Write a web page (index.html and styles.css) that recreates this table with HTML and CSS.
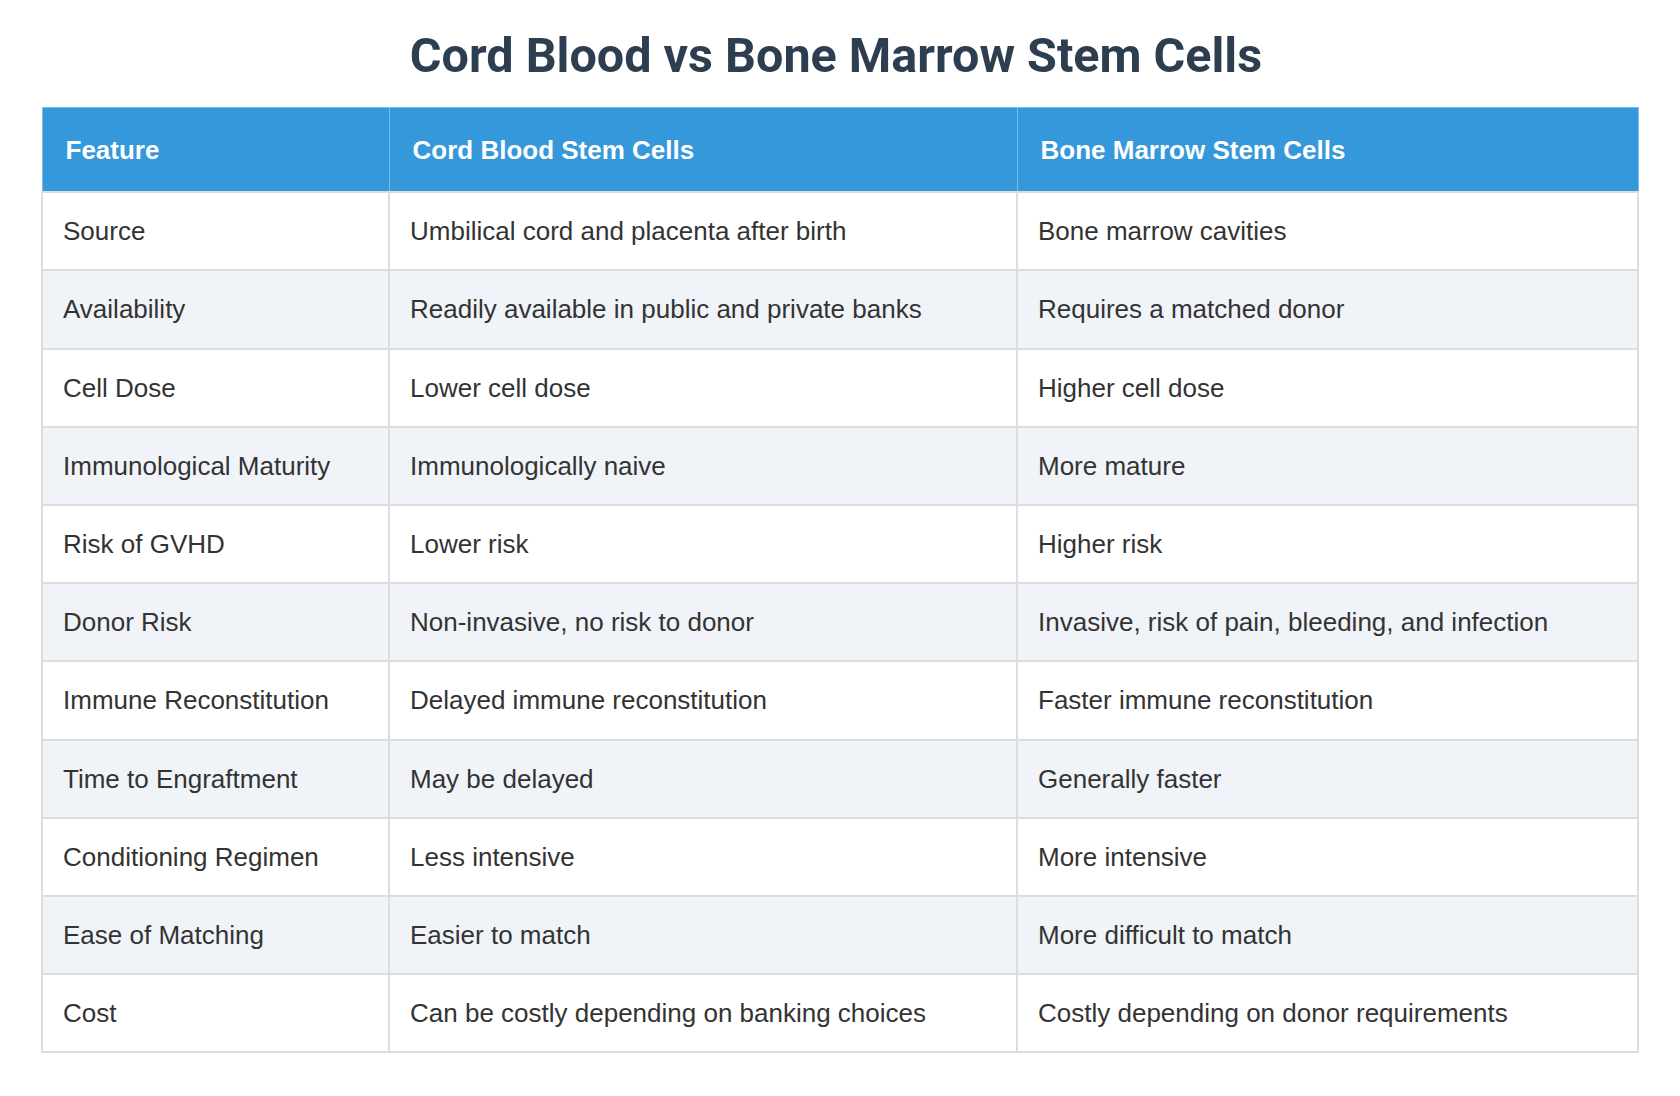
FILE: index.html
```html
<!DOCTYPE html>
<html lang="en">
<head>
<meta charset="utf-8">
<title>Cord Blood vs Bone Marrow Stem Cells</title>
<link rel="stylesheet" href="styles.css">
</head>
<body>
<div class="container">
  <h1 class="title">Cord Blood vs Bone Marrow Stem Cells</h1>
  <table class="compare">
    <colgroup>
      <col class="col-feature">
      <col class="col-cord">
      <col class="col-marrow">
    </colgroup>
    <thead>
      <tr><th>Feature</th><th>Cord Blood Stem Cells</th><th>Bone Marrow Stem Cells</th></tr>
    </thead>
    <tbody>
      <tr><td>Source</td><td>Umbilical cord and placenta after birth</td><td>Bone marrow cavities</td></tr>
      <tr><td>Availability</td><td>Readily available in public and private banks</td><td>Requires a matched donor</td></tr>
      <tr><td>Cell Dose</td><td>Lower cell dose</td><td>Higher cell dose</td></tr>
      <tr><td>Immunological Maturity</td><td>Immunologically naive</td><td>More mature</td></tr>
      <tr><td>Risk of GVHD</td><td>Lower risk</td><td>Higher risk</td></tr>
      <tr><td>Donor Risk</td><td>Non-invasive, no risk to donor</td><td>Invasive, risk of pain, bleeding, and infection</td></tr>
      <tr><td>Immune Reconstitution</td><td>Delayed immune reconstitution</td><td>Faster immune reconstitution</td></tr>
      <tr><td>Time to Engraftment</td><td>May be delayed</td><td>Generally faster</td></tr>
      <tr><td>Conditioning Regimen</td><td>Less intensive</td><td>More intensive</td></tr>
      <tr><td>Ease of Matching</td><td>Easier to match</td><td>More difficult to match</td></tr>
      <tr><td>Cost</td><td>Can be costly depending on banking choices</td><td>Costly depending on donor requirements</td></tr>
    </tbody>
  </table>
</div>
</body>
</html>
```
FILE: styles.css
```css
html, body {
  margin: 0;
  padding: 0;
  background: #ffffff;
}

body {
  font-family: "Liberation Sans", Arial, Helvetica, sans-serif;
  color: #333333;
}

.container {
  max-width: 1598px;
  margin: 0 auto;
  padding-top: 26px;
}

.title {
  margin: 0 0 21px 0;
  padding-right: 8px;
  font-family: Roboto, "Liberation Sans", Arial, sans-serif;
  font-weight: 700;
  font-size: 48.5px;
  line-height: 60px;
  text-align: center;
  color: #2c3e50;
}

.compare {
  width: 100%;
  border-collapse: collapse;
  font-family: "Liberation Sans", Arial, Helvetica, sans-serif;
  font-size: 26px;
  line-height: 28.2px;
}

.col-feature { width: 347px; }
.col-cord { width: 628px; }

.compare th {
  background: #3498db;
  color: #ffffff;
  font-weight: 700;
  text-align: left;
  padding: 28px 23px 27px 23px;
  border: 1px solid #7dbde9;
}

.compare td {
  padding: 24px 20px;
  border: 2px solid #dddddd;
  color: #333333;
  text-align: left;
}

.compare tbody tr:nth-child(even) td {
  background: #f0f4f9;
}
```
